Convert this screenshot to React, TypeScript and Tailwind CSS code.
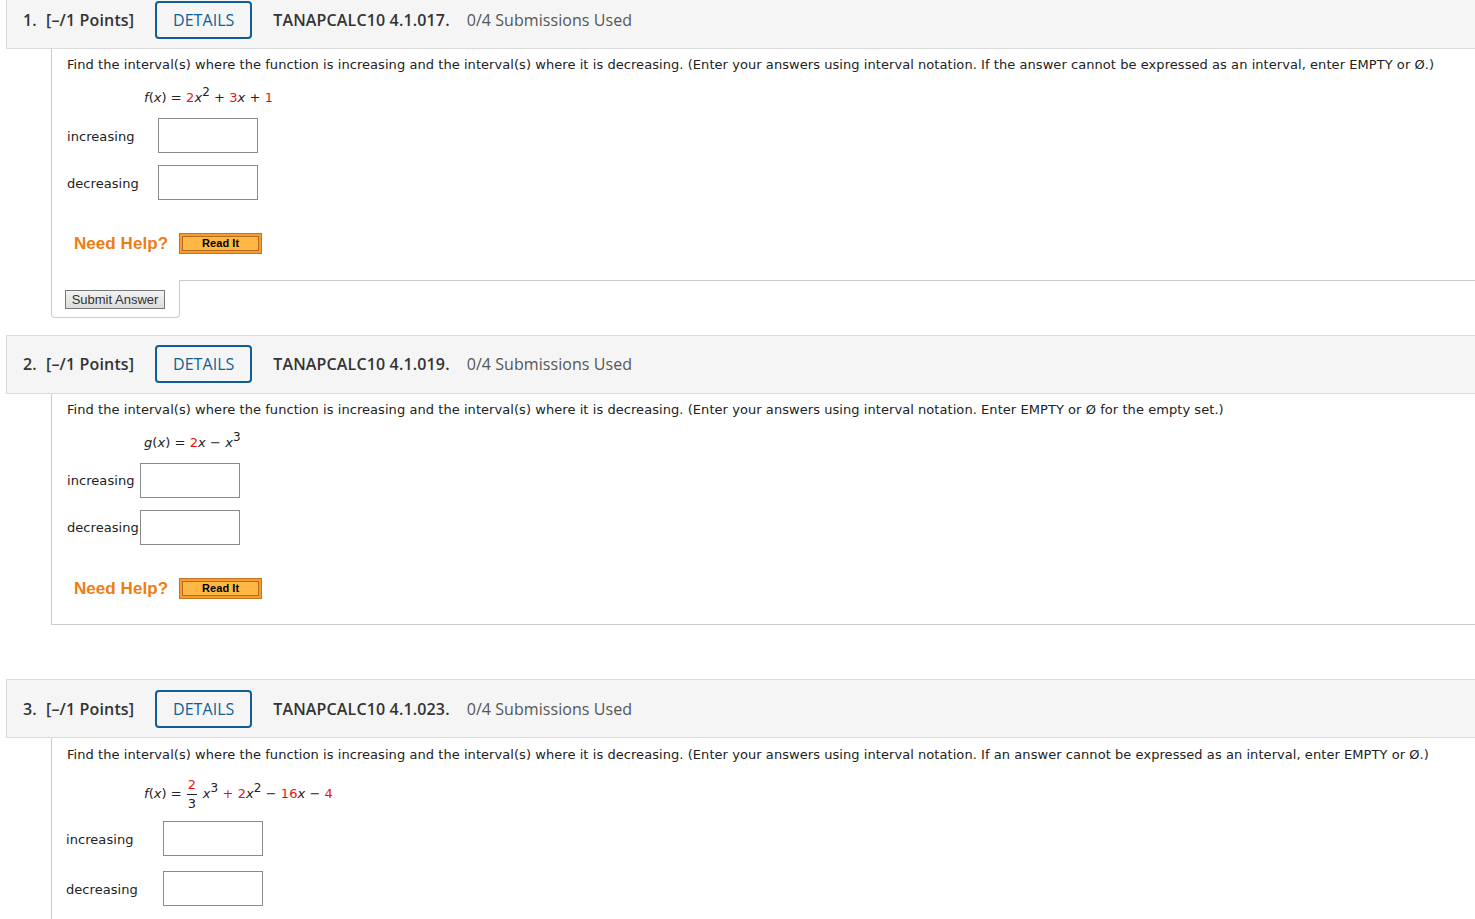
import React from "react";

const body = { fontFamily: '"DejaVu Sans", Verdana, sans-serif' };
const head = { fontFamily: '"Open Sans", sans-serif' };
const arial = { fontFamily: '"Liberation Sans", Arial, sans-serif' };

const Red = ({ children }: { children: React.ReactNode }) => <span className="text-[#f01010]">{children}</span>;
const V = ({ children }: { children: React.ReactNode }) => <i className="italic">{children}</i>;

const Header = ({ num, code }: { num: number; code: string }) => (
  <div className="ml-[6px] h-[59px] flex items-center bg-[#f5f5f5] border-y border-l border-[#dcdcdc] pl-[16px] text-[16px] text-[#333]" style={head}>
    <span className="font-semibold w-[23px]">{num}.</span>
    <span className="font-semibold tracking-[0.15px]">[–/1 Points]</span>
    <button className="ml-[21px] h-[38px] w-[97px] border-2 border-[#0f5f94] rounded-[4px] text-[#0f5f94] bg-transparent">
      DETAILS
    </button>
    <span className="ml-[21px] font-semibold tracking-[0.15px]">{code}</span>
    <span className="ml-[17px] text-[#555]">0/4 Submissions Used</span>
  </div>
);

const Input = () => <div className="w-[100px] h-[35px] border border-[#8a8a8a] bg-white" />;

const Row = ({ label, w, className }: { label: string; w: string; className?: string }) => (
  <div className={"flex items-center " + (className ?? "")}>
    <span className={w + " pt-[2px]"}>{label}</span>
    <Input />
  </div>
);

const NeedHelp = () => (
  <div className="flex items-center pl-[7px]" style={arial}>
    <span className="text-[17px] font-bold text-[#ee7d11]">Need Help?</span>
    <button className="ml-[11px] w-[83px] h-[21px] bg-[#f59e2b] border border-[#c47424] p-[2px]">
      <div className="h-full bg-[#ffb845] border border-[#b96a1e] flex items-center justify-center text-[11px] font-bold text-black leading-none">
        Read It
      </div>
    </button>
  </div>
);

export default function App() {
  return (
    <div className="bg-white min-h-screen -mt-[10px] text-[13px] text-[#222] tracking-[0.06px]" style={body}>
      {/* Question 1 */}
      <Header num={1} code="TANAPCALC10 4.1.017." />
      <div className="ml-[51px] border-l border-[#cccccc] pl-[15px] pt-[8px] pb-[23px]">
        <p className="leading-[16px]">
          Find the interval(s) where the function is increasing and the interval(s) where it is decreasing. (Enter your answers using interval notation. If the answer cannot be expressed as an interval, enter EMPTY or Ø.)
        </p>
        <div className="ml-[77px] mt-[17px] leading-[16px]">
          <V>f</V>(<V>x</V>) = <Red>2</Red><V>x</V><sup className="text-[12px]">2</sup> + <Red>3</Red><V>x</V> + <Red>1</Red>
        </div>
        <Row label="increasing" w="w-[91px]" className="mt-[12px]" />
        <Row label="decreasing" w="w-[91px]" className="mt-[12px]" />
        <div className="mt-[31px]">
          <NeedHelp />
        </div>
      </div>
      <div className="flex">
        <div className="ml-[51px] w-[129px] h-[38px] border-l border-r border-b border-[#cccccc] rounded-b-[4px] pl-[13px] pt-[10px]">
          <button className="h-[19px] w-[100px] border border-[#777] bg-gradient-to-b from-[#f2f2f2] to-[#dcdcdc] text-[13px] text-[#333] leading-none tracking-normal" style={arial}>
            Submit Answer
          </button>
        </div>
        <div className="flex-1 border-t border-[#cccccc] -ml-px" />
      </div>

      {/* Question 2 */}
      <div className="mt-[17px]">
        <Header num={2} code="TANAPCALC10 4.1.019." />
      </div>
      <div className="ml-[51px] border-l border-b border-[#cccccc] pl-[15px] pt-[8px] pb-[23px]">
        <p className="leading-[16px]">
          Find the interval(s) where the function is increasing and the interval(s) where it is decreasing. (Enter your answers using interval notation. Enter EMPTY or Ø for the empty set.)
        </p>
        <div className="ml-[77px] mt-[17px] leading-[16px]">
          <V>g</V>(<V>x</V>) = <Red>2</Red><V>x</V> − <V>x</V><sup className="text-[12px]">3</sup>
        </div>
        <Row label="increasing" w="w-[73px]" className="mt-[12px]" />
        <Row label="decreasing" w="w-[73px]" className="mt-[12px]" />
        <div className="mt-[31px]">
          <NeedHelp />
        </div>
      </div>

      {/* Question 3 */}
      <div className="mt-[54px]">
        <Header num={3} code="TANAPCALC10 4.1.023." />
      </div>
      <div className="ml-[51px] border-l border-[#cccccc] pl-[15px] pt-[9px] pb-[20px]">
        <p className="leading-[16px]">
          Find the interval(s) where the function is increasing and the interval(s) where it is decreasing. (Enter your answers using interval notation. If an answer cannot be expressed as an interval, enter EMPTY or Ø.)
        </p>
        <div className="ml-[77px] mt-[13px] flex items-center leading-[16px]">
          <span>
            <V>f</V>(<V>x</V>) =
          </span>
          <span className="inline-flex flex-col items-center ml-[5px] mr-[6px] leading-[16px] pt-[1px]">
            <span className="text-[#f01010]">2</span>
            <span className="w-[10px] border-t border-[#222] my-[1px]" />
            <span>3</span>
          </span>
          <span>
            <V>x</V><sup className="text-[12px]">3</sup> <Red>+ 2</Red><V>x</V><sup className="text-[12px]">2</sup> − <Red>16</Red><V>x</V> − <Red>4</Red>
          </span>
        </div>
        <div className="-ml-px">
          <Row label="increasing" w="w-[97px]" className="mt-[9px]" />
          <Row label="decreasing" w="w-[97px]" className="mt-[15px]" />
        </div>
      </div>
    </div>
  );
}
